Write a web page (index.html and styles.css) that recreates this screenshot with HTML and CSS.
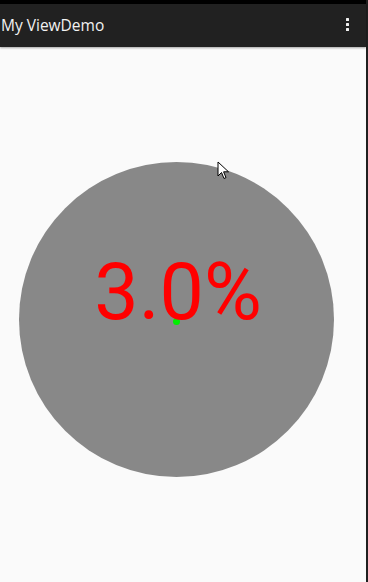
FILE: index.html
```html
<!DOCTYPE html>
<html>
<head>
<meta charset="utf-8">
<link rel="stylesheet" href="styles.css">
</head>
<body>
<div class="screen">
  <div class="app">
    <div class="status"></div>
    <header class="toolbar">
      <span class="title">My ViewDemo</span>
      <span class="menu"><i></i><i></i><i></i></span>
    </header>
    <main class="content">
      <svg class="canvas" width="366" height="534" viewBox="0 0 366 534">
        <circle cx="176.5" cy="272.5" r="157.5" fill="#888888"/>
        <circle cx="176.5" cy="274.5" r="3.5" fill="#00ee00"/>
        <text x="178" y="272" text-anchor="middle" class="pct">3.0%</text>
      </svg>
    </main>
  </div>
  <div class="edge"></div>
</div>
<svg class="cursor" width="14" height="20" viewBox="0 0 14 20">
  <path d="M1 1 L1 15 L4.5 11.5 L7 17.5 L9 16.6 L6.6 10.8 L11.5 10.8 Z" fill="#fff" stroke="#000" stroke-width="1" stroke-linejoin="miter"/>
</svg>
</body>
</html>
```
FILE: styles.css
```css
html, body {
  margin: 0;
  padding: 0;
  width: 368px;
  height: 582px;
  overflow: hidden;
  background: #fafafa;
  font-family: Roboto, "Noto Sans", sans-serif;
}
.screen {
  display: flex;
  width: 368px;
  height: 582px;
}
.app {
  width: 366px;
  display: flex;
  flex-direction: column;
}
.edge {
  width: 2px;
  background: #1f1f1f;
}
.status {
  height: 4px;
  background: #000;
}
.toolbar {
  height: 43px;
  background: #212121;
  display: flex;
  align-items: center;
  justify-content: space-between;
  box-shadow: 0 1px 2px rgba(0,0,0,0.35);
  position: relative;
  z-index: 1;
}
.title {
  color: #f2f2f2;
  font-family: "Open Sans", "Noto Sans", sans-serif;
  font-size: 15.5px;
  margin-left: 1px;
  margin-top: -2px;
}
.menu {
  display: flex;
  flex-direction: column;
  gap: 2px;
  margin-right: 17px;
  margin-top: -2px;
}
.menu i {
  display: block;
  width: 3px;
  height: 3px;
  background: #f0f0f0;
  border-radius: 0.5px;
}
.content {
  flex: 1;
  background: #fafafa;
}
.canvas {
  display: block;
}
.pct {
  font-family: Roboto, sans-serif;
  font-size: 79px;
  fill: #ff0000;
}
.cursor {
  position: absolute;
  left: 217px;
  top: 161px;
}
```
